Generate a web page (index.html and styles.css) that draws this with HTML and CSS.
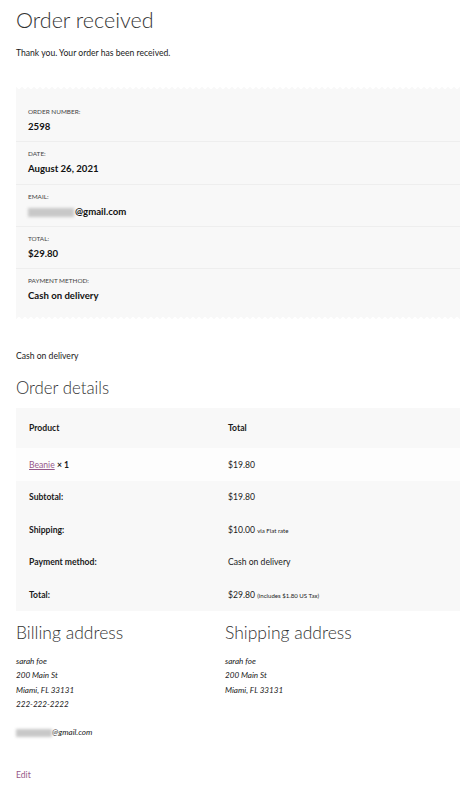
FILE: index.html
```html
<!DOCTYPE html>
<html lang="en">
<head>
<meta charset="utf-8">
<title>Order received</title>
<link rel="stylesheet" href="styles.css">
</head>
<body>
<main class="page">
  <h1 class="title">Order received</h1>
  <p class="thanks">Thank you. Your order has been received.</p>

  <ul class="overview">
    <li class="ov-row"><span class="ov-label">Order number:</span><strong class="ov-value">2598</strong></li>
    <li class="ov-row"><span class="ov-label">Date:</span><strong class="ov-value">August 26, 2021</strong></li>
    <li class="ov-row"><span class="ov-label">Email:</span><strong class="ov-value"><span class="blur blur-a"></span>@gmail.com</strong></li>
    <li class="ov-row"><span class="ov-label">Total:</span><strong class="ov-value">$29.80</strong></li>
    <li class="ov-row"><span class="ov-label">Payment method:</span><strong class="ov-value">Cash on delivery</strong></li>
  </ul>

  <p class="method">Cash on delivery</p>

  <h2 class="section-title">Order details</h2>
  <table class="details">
    <thead>
      <tr><th>Product</th><th>Total</th></tr>
    </thead>
    <tbody>
      <tr><td><a class="link" href="#">Beanie</a> <strong>× 1</strong></td><td>$19.80</td></tr>
    </tbody>
    <tfoot>
      <tr><th>Subtotal:</th><td>$19.80</td></tr>
      <tr><th>Shipping:</th><td>$10.00 <small>via Flat rate</small></td></tr>
      <tr><th>Payment method:</th><td>Cash on delivery</td></tr>
      <tr><th>Total:</th><td>$29.80 <small>(includes $1.80 US Tax)</small></td></tr>
    </tfoot>
  </table>

  <section class="addresses">
    <div class="addr">
      <h2 class="addr-title">Billing address</h2>
      <address class="addr-body">
        <span>sarah foe</span>
        <span>200 Main St</span>
        <span>Miami, FL 33131</span>
        <span>222-222-2222</span>
        <span class="addr-email"><span class="blur blur-b"></span>@gmail.com</span>
      </address>
    </div>
    <div class="addr">
      <h2 class="addr-title">Shipping address</h2>
      <address class="addr-body">
        <span>sarah foe</span>
        <span>200 Main St</span>
        <span>Miami, FL 33131</span>
      </address>
    </div>
  </section>

  <a class="edit" href="#">Edit</a>
</main>
</body>
</html>
```

FILE: styles.css
```css
* { box-sizing: border-box; }
html, body { margin: 0; padding: 0; background: #fff; }
body {
  font-family: "Source Sans Pro", Lato, "Noto Sans", sans-serif;
  color: #1a1a1a;
  font-size: 8.6px;
}
.page {
  padding: 0 14px 0 16px;
  display: flex;
  flex-direction: column;
}
.title {
  margin: 3px 0 0;
  font-size: 21.5px;
  font-weight: 300;
  line-height: 34px;
  color: #333;
}
.thanks {
  margin: 9px 0 0;
  line-height: 14px;
  font-size: 8.6px;
}
.overview {
  list-style: none;
  margin: 26px 0 0;
  padding: 14px 0 10px;
  background-color: #f8f8f8;
  position: relative;
}
.overview::before,
.overview::after {
  content: "";
  position: absolute;
  left: 0;
  right: 0;
  height: 4px;
  background-size: 6px 4px;
  background-repeat: repeat-x;
}
.overview::before {
  top: 0;
  background-image: radial-gradient(circle at 3px 0, #fff 2.6px, transparent 3px);
}
.overview::after {
  bottom: 0;
  background-image: radial-gradient(circle at 3px 4px, #fff 2.6px, transparent 3px);
}
.ov-row {
  display: flex;
  flex-direction: column;
  padding: 6px 13px 6px 12px;
  border-bottom: 1px solid #eeeeee;
}
.ov-row:last-child { border-bottom: 0; }
.ov-label {
  text-transform: uppercase;
  font-size: 6.4px;
  line-height: 12px;
  color: #444;
}
.ov-value {
  font-size: 9.6px;
  line-height: 17.3px;
  font-weight: 700;
  color: #111;
}
.blur {
  display: inline-block;
  vertical-align: middle;
  background: #c8c8c8;
  filter: blur(1.5px);
}
.blur-a { width: 46px; height: 9px; margin-right: 1px; }
.blur-b { width: 36px; height: 8px; }
.method {
  margin: 29px 0 0;
  line-height: 14px;
}
.section-title {
  margin: 11px 0 0;
  font-size: 16.8px;
  font-weight: 300;
  line-height: 28px;
  color: #333;
}
.details {
  margin-top: 6px;
  width: 100%;
  border-collapse: collapse;
  table-layout: fixed;
}
.details th, .details td {
  text-align: left;
  padding: 0 13px;
  font-size: 8.6px;
}
.details th:first-child, .details td:first-child { width: 199px; }
.details thead th {
  background: #f8f8f8;
  height: 40px;
  font-weight: 700;
}
.details tbody td {
  background: #fdfdfd;
  height: 33px;
}
.details tfoot th, .details tfoot td {
  background: #f8f8f8;
  height: 32.5px;
}
.details tfoot th { font-weight: 700; }
.details tfoot tr:first-child th, .details tfoot tr:first-child td { height: 32px; }
.details small { font-size: 6.1px; }
.link { color: #96588a; text-decoration: underline; }
.addresses {
  display: grid;
  grid-template-columns: 209px 1fr;
  margin-top: 9px;
}
.addr-title {
  margin: 0;
  font-size: 17.5px;
  font-weight: 300;
  line-height: 26px;
  color: #333;
}
.addr-body {
  display: flex;
  flex-direction: column;
  margin-top: 8px;
  font-style: italic;
  font-size: 8.1px;
  line-height: 14.5px;
}
.addr-email { margin-top: 13px; }
.edit {
  margin-top: 29px;
  align-self: flex-start;
  color: #96588a;
  text-decoration: none;
  font-size: 8.6px;
  line-height: 14px;
}
```
